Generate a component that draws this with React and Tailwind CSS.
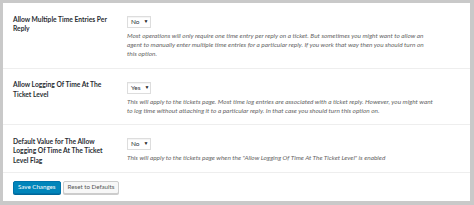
import React from "react";

const Select = ({ value }) => (
  <div className="flex items-center gap-[4px] h-[12px] w-[24px] border border-[#dddddd] bg-white pl-[3px] text-[6.5px] text-[#32373c] shadow-[inset_0_1px_1px_rgba(0,0,0,0.05)]">
    <span>{value}</span>
    <span className="text-[5px] text-[#222]">▼</span>
  </div>
);

const SettingRow = ({ label, value, lines }) => (
  <div className="flex border-b border-[#eeeeee] pl-[10px] pt-[13px] pb-[9.5px]">
    <div className="w-[114px] shrink-0 -mt-[1.5px] -mb-[4px] text-[6.7px] leading-[9.5px] font-bold text-[#2a2e33]">
      {label.map((l, i) => (
        <div key={i} className="whitespace-nowrap">
          {l}
        </div>
      ))}
    </div>
    <div className="flex flex-col">
      <Select value={value} />
      <div className="mt-[3px] text-[6.45px] leading-[9px] italic text-[#666666]">
        {lines.map((l, i) => (
          <div key={i} className="whitespace-nowrap">
            {l}
          </div>
        ))}
      </div>
    </div>
  </div>
);

export default function App() {
  return (
    <div
      className="w-[474px] h-[205px] bg-[#c9c9c9] pt-[3px] pl-[3px] pr-[4px] pb-[4px]"
      style={{ fontFamily: "Lato, 'Noto Sans', sans-serif" }}
    >
      <div className="h-full bg-white flex flex-col">
        <SettingRow
          label={["Allow Multiple Time Entries Per", "Reply"]}
          value="No"
          lines={[
            "Most operations will only require one time entry per reply on a ticket. But sometimes you might want to allow an",
            "agent to manually enter multiple time entries for a particular reply. If you work that way then you should turn on",
            "this option.",
          ]}
        />
        <SettingRow
          label={["Allow Logging Of Time At The", "Ticket Level"]}
          value="Yes"
          lines={[
            "This will apply to the tickets page. Most time log entries are associated with a ticket reply. However, you might want",
            "to log time without attaching it to a particular reply. In that case you should turn this option on.",
          ]}
        />
        <SettingRow
          label={["Default Value for The Allow", "Logging Of Time At The Ticket", "Level Flag"]}
          value="No"
          lines={[
            'This will apply to the tickets page when the "Allow Logging Of Time At The Ticket Level" is enabled',
          ]}
        />
        <div className="flex gap-[2px] pl-[10px] pt-[8px]">
          <button className="h-[13px] px-[4px] rounded-[2px] border border-[#0073aa] bg-[#0085ba] text-[6.2px] text-white shadow-[0_1px_0_#006799]">
            Save Changes
          </button>
          <button className="h-[13px] px-[4px] rounded-[2px] border border-[#cccccc] bg-[#f7f7f7] text-[6.2px] text-[#555555] shadow-[0_1px_0_#cccccc]">
            Reset to Defaults
          </button>
        </div>
      </div>
    </div>
  );
}
